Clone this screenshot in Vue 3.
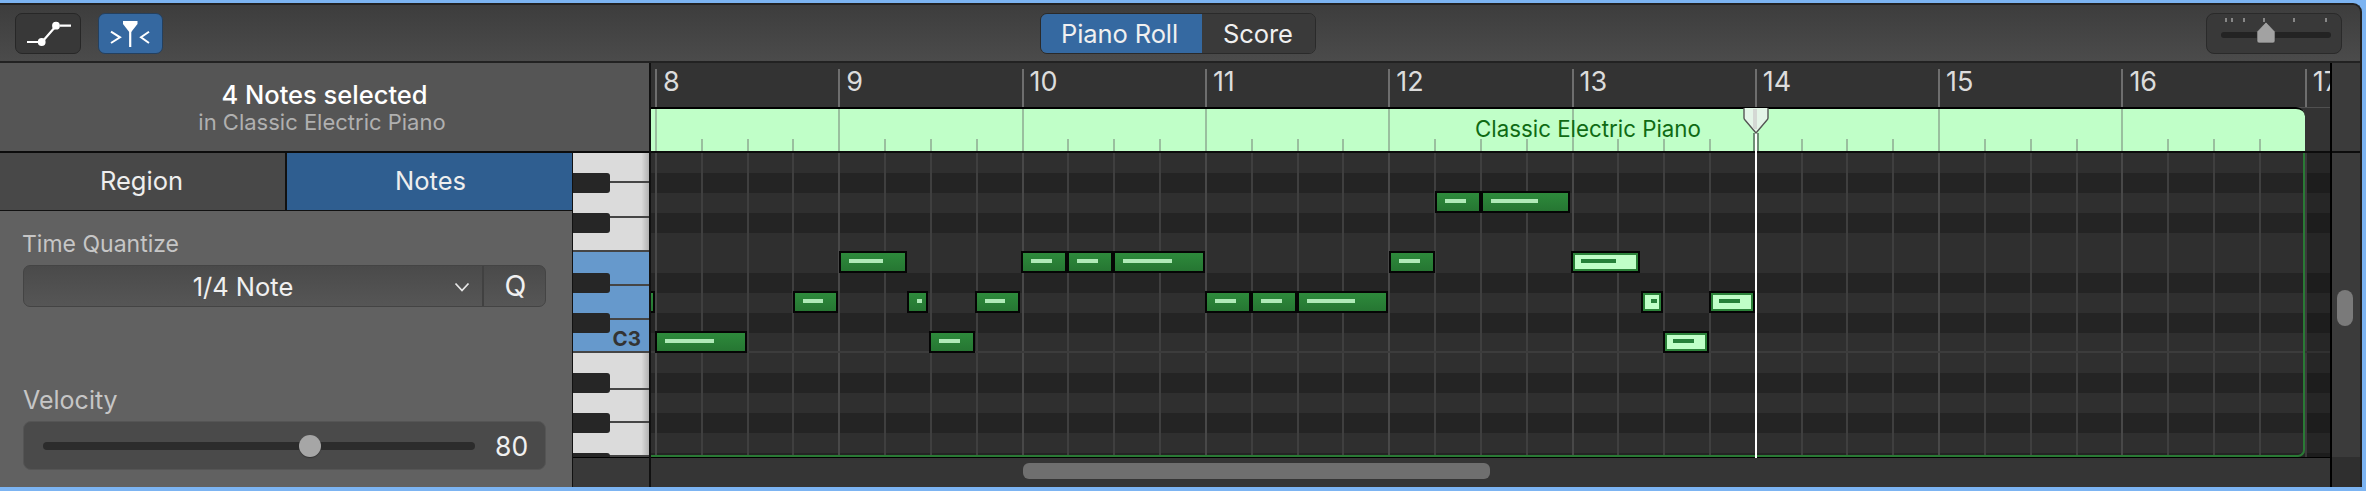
<script setup>
const X0 = 651
const barX = k => 656 + 183.3 * k - X0
const bars = Array.from({ length: 10 }, (_, k) => ({ n: 8 + k, x: barX(k) }))
const lines = Array.from({ length: 37 }, (_, i) => ({ x: barX(0) + 45.825 * i, bar: i % 4 === 0 }))
const rows = [1,0,1,0,1,1,0,1,0,1,1,0,1,0,1,0].map((l, i) => ({ light: !!l, i }))
const raw = [
  [191,1435,1481,0],[191,1481,1570,0],
  [251,839,907,0],[251,1021,1067,0],[251,1067,1113,0],[251,1113,1205,0],[251,1389,1435,0],[251,1571,1640,1],
  [291,647,655,0],[291,793,838,0],[291,907,928,0],[291,975,1020,0],[291,1205,1251,0],[291,1251,1297,0],[291,1297,1388,0],[291,1641,1663,1],[291,1709,1755,1],
  [331,655,747,0],[331,929,975,0],[331,1663,1709,1]
]
const notes = raw.map(([y, a, b, s]) => ({
  style: { left: a - X0 + 'px', top: y - 153 + 'px', width: b - a + 'px' },
  bar: { width: Math.max(0, Math.round((b - a) * 0.62 - 8)) + 'px' },
  sel: !!s
}))
const keyEdges = [153,183,218,252,286,320,353,390,423,457]
const keys = keyEdges.slice(0, -1).map((y, i) => ({ h: keyEdges[i + 1] - y + 'px', blue: y >= 252 && y < 353 }))
const blacks = [173,213,273,313,373,413,453].map(y => y - 153 + 'px')
const ticks = [18, 23.5, 36, 56, 86, 118]
</script>

<template>
  <div class="frame">
    <div class="window">
      <header class="toolbar">
        <div class="tool-left">
          <button class="tbtn">
            <svg width="66" height="41" viewBox="0 0 66 41">
              <path d="M12 29H23M27 29L41 13M45 12.7H56" stroke="#fff" stroke-width="2.2" fill="none"/>
              <circle cx="26.7" cy="29" r="3.9" fill="#fff"/><circle cx="41" cy="12.7" r="3.9" fill="#fff"/>
            </svg>
          </button>
          <button class="tbtn active">
            <svg width="65" height="41" viewBox="0 0 65 41">
              <path d="M25 8H39.5V11L33.2 19H31.2L25 11Z" fill="#fff"/>
              <path d="M32.2 18V34" stroke="#fff" stroke-width="2.2"/>
              <path d="M13 18.7L22 24.3L13 30M51 18.7L43 24.3L51 30" stroke="#fff" stroke-width="2" fill="none"/>
            </svg>
          </button>
        </div>
        <div class="segment">
          <span class="seg on">Piano Roll</span>
          <span class="seg off">Score</span>
        </div>
        <div class="zoomer">
          <i v-for="t in ticks" :key="t" class="ztick" :style="{ left: t + 'px' }"></i>
          <div class="ztrack"></div>
          <svg class="zthumb" width="20" height="22" viewBox="0 0 20 22">
            <path d="M10 0L19 9.5V19Q19 21 17 21H3Q1 21 1 19V9.5Z" fill="#a2a2a2" stroke="#2b2b2b" stroke-width=".6"/>
          </svg>
        </div>
      </header>

      <div class="body">
        <aside class="left">
          <div class="info">
            <div class="info-title">4 Notes selected</div>
            <div class="info-sub">in Classic Electric Piano</div>
          </div>
          <div class="lower">
            <div class="inspector">
              <div class="tabs">
                <span class="tab region">Region</span>
                <span class="tab notes">Notes</span>
              </div>
              <div class="panel">
                <div class="label tq">Time Quantize</div>
                <div class="dropdown">
                  <div class="dd-main">
                    <span>1/4 Note</span>
                    <svg class="chev" width="16" height="10" viewBox="0 0 16 10"><path d="M1.5 1.5L8 8.5L14.5 1.5" stroke="#e6e6e6" stroke-width="1.8" fill="none"/></svg>
                  </div>
                  <div class="dd-q">Q</div>
                </div>
                <div class="label vel">Velocity</div>
                <div class="slider">
                  <div class="track"><i class="thumb"></i></div>
                  <span class="val">80</span>
                </div>
              </div>
            </div>
            <div class="piano-col">
              <div class="piano">
                <div v-for="(k, i) in keys" :key="i" class="key" :class="{ blue: k.blue }" :style="{ height: k.h }"></div>
                <i v-for="t in blacks" :key="t" class="black" :style="{ top: t }"></i>
                <span class="c3">C3</span>
              </div>
              <div class="piano-foot"></div>
            </div>
          </div>
        </aside>

        <main class="main">
          <div class="ruler">
            <div v-for="b in bars" :key="b.n" class="bar-mark" :style="{ left: b.x + 'px' }">
              <span>{{ b.n }}</span>
            </div>
          </div>
          <div class="strip">
            <div class="regionbox">
              <template v-for="l in lines" :key="l.x">
                <i v-if="l.x < 1654" class="rline" :class="{ bar: l.bar }" :style="{ left: l.x + 'px' }"></i>
              </template>
              <span class="rname">Classic Electric Piano</span>
            </div>
          </div>
          <div class="grid">
            <div v-for="r in rows" :key="r.i" class="row" :class="{ light: r.light }"></div>
            <i v-for="l in lines" :key="l.x" class="gline" :class="{ bar: l.bar }" :style="{ left: l.x + 'px' }"></i>
            <i class="cline"></i>
            <div class="outside"></div>
            <div class="region-edge"></div>
            <div v-for="(n, i) in notes" :key="i" class="note" :class="{ sel: n.sel }" :style="n.style">
              <i class="nbar" :style="n.bar"></i>
            </div>
          </div>
          <div class="foot">
            <div class="hscroll"></div>
          </div>
          <div class="playshade"></div>
          <div class="playline"></div>
          <svg class="playhead" width="26" height="26" viewBox="0 0 26 26">
            <path d="M1 -2V10Q1 11 2 12L13 25L24 12Q25 11 25 10V-2Z" fill="#e4f5e8" stroke="#555" stroke-width="1.4"/>
            <path d="M10 1H14V21H10Z" fill="#d4d8d4"/>
          </svg>
        </main>

        <div class="vcol">
          <div class="vtop"></div>
          <div class="vmid"><div class="vthumb"></div></div>
          <div class="vbot"></div>
        </div>
      </div>
    </div>
  </div>
</template>

<style>
html, body { margin: 0; background: #7cb4f2; }
</style>

<style scoped>
* { box-sizing: border-box; }
.frame {
  width: 2366px; height: 491px; background: #7cb4f2;
  padding: 3px 4px 4px 0; font-family: Inter, "Liberation Sans", sans-serif; overflow: hidden;
}
.window {
  width: 100%; height: 100%; display: flex; flex-direction: column;
  border-top: 2px solid #222; border-right: 2px solid #222; border-top-right-radius: 9px; overflow: hidden; background: #333;
}
.toolbar {
  height: 58px; flex: none; position: relative; display: flex; align-items: flex-start; justify-content: space-between;
  padding: 8px 18px 0 15px; background: linear-gradient(#3d3d3d, #4b4b4b); border-bottom: 2px solid #222;
}
.tool-left { display: flex; gap: 17px; width: 148px; }
.tbtn {
  width: 66px; height: 41px; padding: 0; display: block; background: #383838; border: 1px solid #272727; border-radius: 7px;
}
.tbtn svg { display: block; margin: -1px; }
.tbtn.active { background: #3568a0; border-color: #24405f; }
.segment {
  position: absolute; left: 1040px; top: 8px; width: 276px; height: 41px; display: flex;
  border: 1px solid #2a2a2a; border-radius: 7px; overflow: hidden; font-size: 25.5px; letter-spacing: -.1px; color: #f0f0f0;
}
.seg { display: flex; align-items: center; justify-content: center; }
.seg.on { width: 161px; background: #3569a1; padding-right: 4px; }
.seg.off { flex: 1; background: #3a3a3a; padding-right: 1px; }
.zoomer {
  position: relative; margin-left: auto; width: 136px; height: 41px; background: #393939;
  border: 1px solid #2a2a2a; border-radius: 8px;
}
.ztick { position: absolute; top: 4px; width: 2px; height: 4px; background: #878787; }
.ztrack { position: absolute; left: 14px; width: 110px; top: 18px; height: 6px; border-radius: 3px; background: #232323; }
.zthumb { position: absolute; left: 49px; top: 8px; }

.body { flex: 1; display: flex; min-height: 0; }
.left { width: 651px; flex: none; display: flex; flex-direction: column; border-right: 2px solid #111; }
.info {
  height: 90px; flex: none; background: #555; border-bottom: 2px solid #0c0c0c; display: flex; flex-direction: column; align-items: center; padding-top: 17px;
}
.info-title { font-size: 25.5px; font-weight: 500; color: #fff; line-height: 30px; }
.info-sub { font-size: 22px; color: #b0b0b0; line-height: 25px; margin-right: 5px; }
.lower { flex: 1; display: flex; min-height: 0; }
.inspector { width: 573px; flex: none; display: flex; flex-direction: column; border-right: 1px solid #111; }
.tabs { height: 58px; flex: none; display: flex; border-bottom: 1px solid #111; font-size: 25.5px; color: #eee; }
.tab { display: flex; align-items: center; justify-content: center; padding-bottom: 2px; }
.tab.region { width: 285px; background: #484848; padding-right: 2px; }
.tab.notes { flex: 1; background: #2f5e90; border-left: 2px solid #111; padding-left: 2px; }
.panel { flex: 1; background: #616161; padding: 0 26px 0 23px; }
.label { font-size: 23px; color: #c6c6c6; line-height: 28px; }
.tq { margin-top: 19px; margin-bottom: 7px; margin-left: -1px; }
.dropdown {
  height: 42px; display: flex; border: 1px solid #444; border-radius: 7px; overflow: hidden; color: #f0f0f0; font-size: 25.5px;
  background: linear-gradient(#4a4a4a, #565656);
}
.dd-main { width: 460px; position: relative; display: flex; align-items: center; justify-content: center; border-right: 2px solid #414141; padding-right: 20px; }
.chev { position: absolute; left: 430px; top: 16px; }
.dd-q { flex: 1; display: flex; align-items: center; justify-content: center; font-size: 28.5px; padding-bottom: 2px; padding-left: 2px; }
.vel { margin-top: 79px; margin-bottom: 7px; font-size: 25px; }
.slider {
  height: 49px; background: #4a4a4a; border: 1px solid #555; border-radius: 8px; display: flex; align-items: center;
  padding-left: 19px; position: relative;
}
.track { width: 432px; height: 8px; background: #2c2c2c; border-radius: 4px; position: relative; }
.thumb {
  position: absolute; left: 256px; top: -7px; width: 22px; height: 22px; border-radius: 50%; background: #a6a6a6; box-shadow: 0 1px 1px #333;
}
.val { margin-left: 20px; font-size: 26.5px; color: #f0f0f0; }
.piano-col { flex: 1; display: flex; flex-direction: column; min-width: 0; }
.piano { height: 305px; flex: none; position: relative; overflow: hidden; border-bottom: 1px solid #000; }
.key {
  border-bottom: 2px solid #454545; background: linear-gradient(90deg, #dbdbdb 0, #dbdbdb 90%, #b2b2b2 100%);
}
.key.blue { background: #6699cc; }
.black {
  position: absolute; left: 0; width: 37px; height: 20px; background: #262626; border-radius: 0 3px 3px 0;
}
.c3 { position: absolute; right: 8px; top: 173px; font-size: 20.5px; font-weight: 700; line-height: 25px; color: #333; }
.piano-foot { flex: 1; background: #393939; }

.main { flex: none; width: 1679px; position: relative; display: flex; flex-direction: column; overflow: hidden; }
.ruler { height: 44px; flex: none; background: #333; position: relative; overflow: hidden; }
.bar-mark { position: absolute; top: 6px; bottom: 0; border-left: 2px solid #6e6e6e; padding-left: 6px; margin-left: -1px; color: #dcdcdc; font-size: 27px; line-height: 26px; }
.strip { height: 46px; flex: none; background: #333; border-bottom: 2px solid #0c0c0c; position: relative; }
.strip::before { content: ""; position: absolute; left: 0; right: 0; top: 0; height: 1px; background: #505050; }
.regionbox {
  position: relative; width: 1654px; height: 44px; background: #c0ffc8; border-top: 2px solid #000; border-top-right-radius: 9px; overflow: hidden;
}
.rline { position: absolute; top: 30px; bottom: 0; width: 2px; margin-left: -1px; background: #9abf9f; }
.rline.bar { top: 0; }
.rname { position: absolute; left: 824px; top: 7px; font-size: 22.3px; line-height: 26px; color: #0f6a14; }
.grid { height: 304px; flex: none; position: relative; overflow: hidden; display: flex; flex-direction: column; }
.row { height: 20px; flex: none; background: #242424; }
.row.light { background: #2f2f2f; }
.gline { position: absolute; top: 0; bottom: 0; width: 2px; margin-left: -1px; background: #3f3f3f; }
.gline.bar { background: #484848; }
.cline { position: absolute; left: 0; right: 0; top: 198px; height: 2px; background: #3c3c3c; }
.outside { position: absolute; left: 1654px; right: 0; top: 0; bottom: 0; background: rgba(0, 0, 0, .18); }
.region-edge {
  position: absolute; left: 0; width: 1654px; top: -10px; bottom: 0; border-right: 2px solid #2a7a35; border-bottom: 2px solid #2a7a35; border-bottom-right-radius: 7px;
}
.note {
  position: absolute; height: 22px; border: 2px solid #050505; background: linear-gradient(#2d8a3b, #267632); overflow: hidden;
}
.nbar { position: absolute; left: 8px; top: 6px; height: 4px; background: #b0eab8; }
.note.sel { background: #c0ffc8; box-shadow: inset 0 0 0 2px #2b8239; }
.note.sel .nbar { background: #26813a; }
.foot { flex: 1; background: #353535; border-top: 1px solid #000; position: relative; }
.hscroll { position: absolute; left: 372px; top: 5px; width: 467px; height: 16px; border-radius: 6px; background: #6f6f6f; }
.playshade { position: absolute; left: 1102px; top: 70px; width: 6px; height: 18px; background: #6f8f76; }
.playline { position: absolute; left: 1104px; top: 70px; width: 2px; height: 325px; background: #fff; }
.playhead { position: absolute; left: 1092px; top: 45px; overflow: hidden; }

.vcol { flex: 1; display: flex; flex-direction: column; border-left: 2px solid #000; background: #3b3b3b; }
.vtop { height: 90px; flex: none; border-bottom: 2px solid #0c0c0c; }
.vmid { height: 304px; flex: none; position: relative; }
.vthumb { position: absolute; left: 5px; top: 137px; width: 16px; height: 36px; border-radius: 8px; background: #7a7a7a; }
.vbot { flex: 1; background: #2f2f2f; }
</style>
